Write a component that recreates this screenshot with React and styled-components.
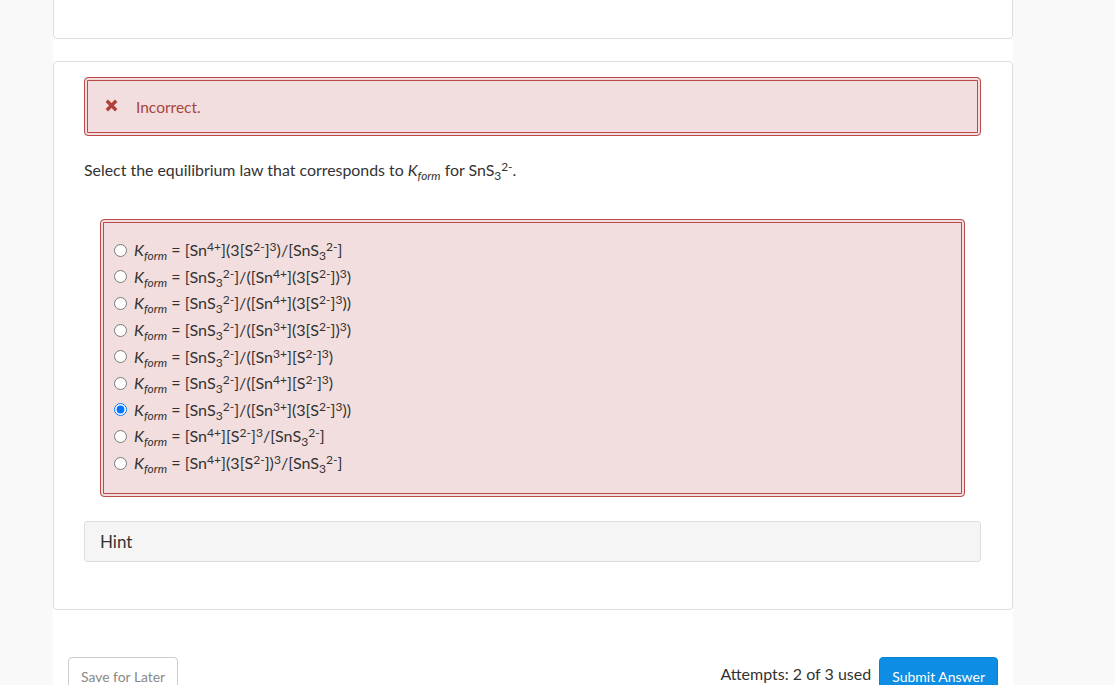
import React from "react";
import styled, { createGlobalStyle } from "styled-components";

const GlobalStyle = createGlobalStyle`
  html, body {
    margin: 0;
    padding: 0;
    background: #f9f9f9;
    font-family: Lato, "Open Sans", sans-serif;
    color: #333;
  }
`;

const Column = styled.div`
  width: 960px;
  margin-left: 53px;
  height: 685px;
  overflow: hidden;
  background: #fff;
`;

const TopCard = styled.div`
  height: 50px;
  margin-top: -13px;
  border: 1px solid #ddd;
  border-radius: 4px;
`;

const Card = styled.div`
  margin-top: 22px;
  border: 1px solid #ddd;
  border-radius: 4px;
  padding: 15px 31px 47px 30px;
`;

const Boxed = styled.div`
  background: #f2dede;
  border: 1px solid #b94a48;
  border-radius: 4px;
  box-shadow: inset 0 0 0 2px #f2dede, inset 0 0 0 3px #b94a48;
`;

const Alert = styled(Boxed)`
  height: 57px;
  display: flex;
  align-items: center;
  padding-left: 19px;
  color: #a94442;
  font-size: 15.5px;
`;

const XIcon = styled.svg`
  width: 15px;
  height: 15px;
  margin-right: 17px;
  margin-top: -3px;
`;

const Question = styled.p`
  margin: 23px 0 0;
  font-size: 15.9px;
  line-height: 22px;
`;

const Options = styled(Boxed)`
  margin: 38px 16px 0 16px;
  padding: 17px 12px 20px;
`;

const Row = styled.label`
  display: flex;
  align-items: center;
  height: 26.6px;
  font-size: 16.1px;
  white-space: nowrap;
`;

const Formula = styled.span`
  display: inline-block;
  line-height: 20px;
`;

const Radio = styled.input`
  width: 13px;
  height: 13px;
  margin: 0 7px 0 1px;
`;

const K = styled.i`
  font-style: italic;
`;

const Sub = styled.sub`
  font-size: ${(p) => (p.$small ? "74%" : "75%")};
  line-height: 0;
  vertical-align: -0.3em;
`;

const Sup = styled.sup`
  font-size: 75%;
  line-height: 0;
  vertical-align: 0.45em;
`;

const Hint = styled.div`
  margin-top: 24px;
  height: 39px;
  background: #f5f5f5;
  border: 1px solid #ddd;
  border-radius: 3px;
  display: flex;
  align-items: center;
  padding-left: 15px;
  font-size: 17px;
`;

const Footer = styled.div`
  display: flex;
  align-items: flex-start;
  padding: 47px 15px 0;
`;

const SaveButton = styled.button`
  height: 36px;
  padding: 2px 12px 0;
  background: #fff;
  border: 1px solid #ccc;
  border-radius: 4px;
  color: #888;
  font-family: Lato, sans-serif;
  font-size: 13.9px;
`;

const Attempts = styled.span`
  margin-left: auto;
  margin-top: 7px;
  font-size: 16px;
  color: #333;
`;

const SubmitButton = styled.button`
  height: 36px;
  margin-left: 8px;
  padding: 2px 12px 0;
  background: #0d8de3;
  border: 1px solid #0a82d4;
  border-radius: 4px;
  color: #fff;
  font-family: Lato, sans-serif;
  font-size: 14px;
`;

const Kform = () => (
  <>
    <K>K</K>
    <Sub $small>
      <K>form</K>
    </Sub>
  </>
);

const SnS3 = () => (
  <>
    [SnS<Sub>3</Sub>
    <Sup>2-</Sup>]
  </>
);
const Sn = ({ c }) => (
  <>
    [Sn<Sup>{c}+</Sup>]
  </>
);
const S = () => (
  <>
    [S<Sup>2-</Sup>]
  </>
);
const Cube = () => <Sup>3</Sup>;

const options = [
  <>
    <Sn c={4} />(3<S />
    <Cube />)/<SnS3 />
  </>,
  <>
    <SnS3 />/(<Sn c={4} />(3<S />)<Cube />)
  </>,
  <>
    <SnS3 />/(<Sn c={4} />(3<S />
    <Cube />))
  </>,
  <>
    <SnS3 />/(<Sn c={3} />(3<S />)<Cube />)
  </>,
  <>
    <SnS3 />/(<Sn c={3} />
    <S />
    <Cube />)
  </>,
  <>
    <SnS3 />/(<Sn c={4} />
    <S />
    <Cube />)
  </>,
  <>
    <SnS3 />/(<Sn c={3} />(3<S />
    <Cube />))
  </>,
  <>
    <Sn c={4} />
    <S />
    <Cube />/<SnS3 />
  </>,
  <>
    <Sn c={4} />(3<S />)<Cube />/<SnS3 />
  </>,
];

export default function App() {
  return (
    <>
      <GlobalStyle />
      <Column>
        <TopCard />
        <Card>
          <Alert>
            <XIcon viewBox="0 0 16 16">
              <path
                d="M3 3 L13 13 M13 3 L3 13"
                stroke="#b0403d"
                strokeWidth="3.6"
                strokeLinecap="butt"
              />
            </XIcon>
            Incorrect.
          </Alert>
          <Question>
            Select the equilibrium law that corresponds to <Kform /> for{" "}
            SnS<Sub>3</Sub>
            <Sup>2-</Sup>.
          </Question>
          <Options>
            {options.map((o, i) => (
              <Row key={i}>
                <Radio type="radio" name="ans" defaultChecked={i === 6} />
                <Formula>
                  <Kform /> = {o}
                </Formula>
              </Row>
            ))}
          </Options>
          <Hint>Hint</Hint>
        </Card>
        <Footer>
          <SaveButton>Save for Later</SaveButton>
          <Attempts>Attempts: 2 of 3 used</Attempts>
          <SubmitButton>Submit Answer</SubmitButton>
        </Footer>
      </Column>
    </>
  );
}
